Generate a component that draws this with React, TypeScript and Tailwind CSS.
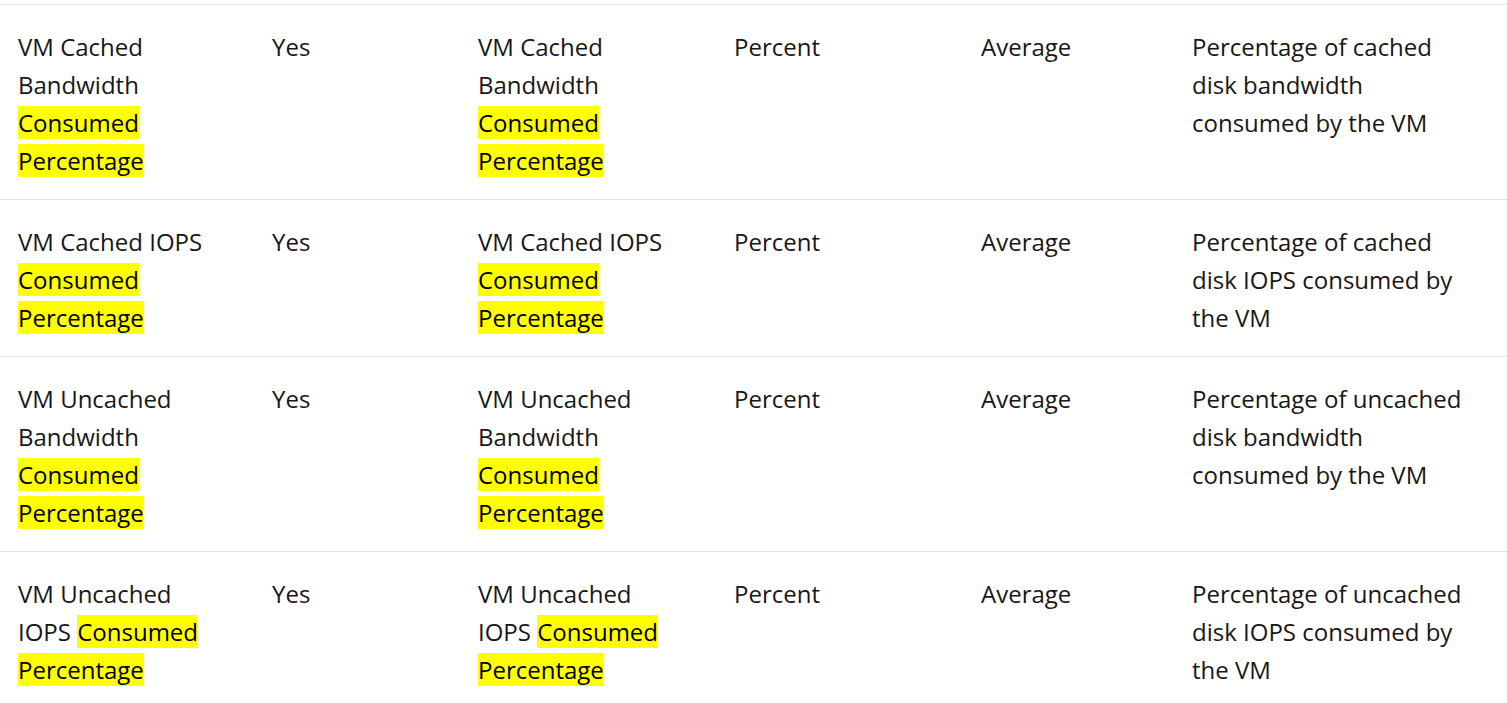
const rows = [
  {
    name: [<>VM Cached</>, <>Bandwidth</>, <mark className="bg-[#ffff00] text-black">Consumed</mark>, <mark className="bg-[#ffff00] text-black">Percentage</mark>],
    desc: ["Percentage of cached", "disk bandwidth", "consumed by the VM"],
  },
  {
    name: [<>VM Cached IOPS</>, <mark className="bg-[#ffff00] text-black">Consumed</mark>, <mark className="bg-[#ffff00] text-black">Percentage</mark>],
    desc: ["Percentage of cached", "disk IOPS consumed by", "the VM"],
  },
  {
    name: [<>VM Uncached</>, <>Bandwidth</>, <mark className="bg-[#ffff00] text-black">Consumed</mark>, <mark className="bg-[#ffff00] text-black">Percentage</mark>],
    desc: ["Percentage of uncached", "disk bandwidth", "consumed by the VM"],
  },
  {
    name: [<>VM Uncached</>, <>IOPS <mark className="bg-[#ffff00] text-black">Consumed</mark></>, <mark className="bg-[#ffff00] text-black">Percentage</mark>],
    desc: ["Percentage of uncached", "disk IOPS consumed by", "the VM"],
  },
];

function Lines({ items }: { items: React.ReactNode[] }) {
  return (
    <>
      {items.map((l, i) => (
        <div key={i} className="whitespace-nowrap">{l}</div>
      ))}
    </>
  );
}

export default function App() {
  return (
    <div
      className="min-h-screen bg-white pt-[4px] text-[#171717] text-[24px] leading-[38px]"
      style={{ fontFamily: '"Open Sans", "Noto Sans", sans-serif' }}
    >
      <div className="border-t border-[#e3e3e3]">
        {rows.map((r, i) => (
          <div
            key={i}
            className="grid grid-cols-[254px_206px_256px_247px_211px_1fr] border-b border-[#e3e3e3] pt-[23px] pb-[19px]"
          >
            <div className="pl-[18px]"><Lines items={r.name} /></div>
            <div className="pl-[18px]">Yes</div>
            <div className="pl-[18px]"><Lines items={r.name} /></div>
            <div className="pl-[18px]">Percent</div>
            <div className="pl-[18px]">Average</div>
            <div className="pl-[18px]"><Lines items={r.desc} /></div>
          </div>
        ))}
      </div>
    </div>
  );
}
